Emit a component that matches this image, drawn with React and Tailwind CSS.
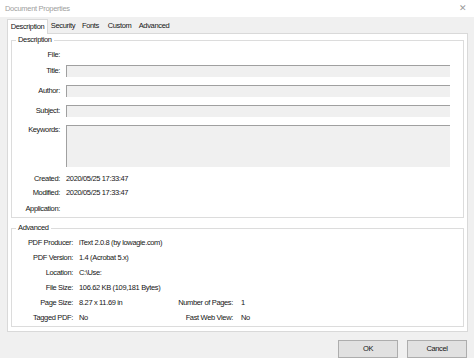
import React from 'react';

const font = { fontFamily: '"Liberation Sans", Arial, sans-serif' };
const txt = 'text-[7.5px] tracking-[-0.35px] leading-none text-[#161616]';

function Label({ children, w }) {
  return <div className={`${w} shrink-0 text-right whitespace-nowrap ${txt}`}>{children}</div>;
}

function Field({ h = 'h-[12px]' }) {
  return <div className={`${h} w-[384px] bg-[#f0f0f0] border-t border-l border-[#a0a0a0]`} />;
}

function DescRow({ label, children, className = '', top = false }) {
  return (
    <div className={`flex gap-[6px] ${top ? 'items-start' : 'items-center'} ${className}`}>
      <div className={top ? 'pt-[1px]' : ''}>
        <Label w="w-[48px]">{label}</Label>
      </div>
      {children}
    </div>
  );
}

function AdvRow({ label, value, label2, value2, className = '' }) {
  return (
    <div className={`flex items-center h-[12px] ${className}`}>
      <Label w="w-[61px]">{label}</Label>
      <div className={`w-[95px] pl-[6px] whitespace-nowrap ${txt}`}>{value}</div>
      {label2 && <Label w="w-[65px]">{label2}</Label>}
      {label2 && <div className={`pl-[8px] ${txt}`}>{value2}</div>}
    </div>
  );
}

const tabs = [
  ['Description', 'w-[41px]'],
  ['Security', 'w-[30px]'],
  ['Fonts', 'w-[25px]'],
  ['Custom', 'w-[33px]'],
  ['Advanced', 'w-[36px]'],
];

export default function App() {
  return (
    <div className="w-[474px] h-[358px] bg-[#f0f0f0] flex flex-col overflow-hidden" style={font}>
      <div className="h-[17px] bg-white flex items-center justify-between px-[5px] shrink-0">
        <span className="text-[7.5px] tracking-[-0.3px] text-[#a0a0a0]">Document Properties</span>
        <span className="text-[9px] text-[#9a9a9a] leading-none pr-[2px]">✕</span>
      </div>

      <div className="flex pl-[7px] mt-[2px] h-[14px] relative z-10">
        {tabs.map(([t, w], i) => (
          <div
            key={t}
            className={`${w} flex items-center justify-center ${txt} ${
              i === 0 ? 'bg-white border-t border-l border-r border-[#d9d9d9] h-[15px]' : 'h-[14px]'
            }`}
          >
            {t}
          </div>
        ))}
      </div>

      <div className="ml-[7px] mr-[6px] bg-white border border-[#d9d9d9] px-[3px] pt-[6px] pb-[4px] flex flex-col">
        <div className="relative border border-[#dcdcdc] pb-[2px] flex flex-col">
          <span className={`absolute -top-[5px] left-[4px] bg-white px-[2px] ${txt}`}>Description</span>
          <DescRow label="File:" className="mt-[8px] h-[12px]" />
          <DescRow label="Title:" className="mt-[4px]"><Field /></DescRow>
          <DescRow label="Author:" className="mt-[8px]"><Field /></DescRow>
          <DescRow label="Subject:" className="mt-[8px]"><Field /></DescRow>
          <DescRow label="Keywords:" className="mt-[8px]" top><Field h="h-[42px]" /></DescRow>
          <DescRow label="Created:" className="mt-[6px] h-[12px]">
            <span className={txt}>2020/05/25 17:33:47</span>
          </DescRow>
          <DescRow label="Modified:" className="mt-[2px] h-[12px]">
            <span className={txt}>2020/05/25 17:33:47</span>
          </DescRow>
          <DescRow label="Application:" className="mt-[4px] h-[12px]" />
        </div>

        <div className="relative mt-[10px] border border-[#dcdcdc] pb-[2px] flex flex-col">
          <span className={`absolute -top-[5px] left-[4px] bg-white px-[2px] ${txt}`}>Advanced</span>
          <AdvRow label="PDF Producer:" value="iText 2.0.8 (by lowagie.com)" className="mt-[8px]" />
          <AdvRow label="PDF Version:" value="1.4 (Acrobat 5.x)" className="mt-[3px]" />
          <AdvRow label="Location:" value="C:\Use:" className="mt-[3px]" />
          <AdvRow label="File Size:" value="106.62 KB (109,181 Bytes)" className="mt-[3px]" />
          <AdvRow label="Page Size:" value="8.27 x 11.69 in" label2="Number of Pages:" value2="1" className="mt-[3px]" />
          <AdvRow label="Tagged PDF:" value="No" label2="Fast Web View:" value2="No" className="mt-[3px]" />
        </div>
      </div>

      <div className="flex justify-end gap-[9px] pr-[7px] mt-[8px]">
        <button className={`w-[60px] h-[18px] bg-[#e1e1e1] border border-[#adadad] ${txt}`}>OK</button>
        <button className={`w-[60px] h-[18px] bg-[#e1e1e1] border border-[#adadad] ${txt}`}>Cancel</button>
      </div>
    </div>
  );
}
